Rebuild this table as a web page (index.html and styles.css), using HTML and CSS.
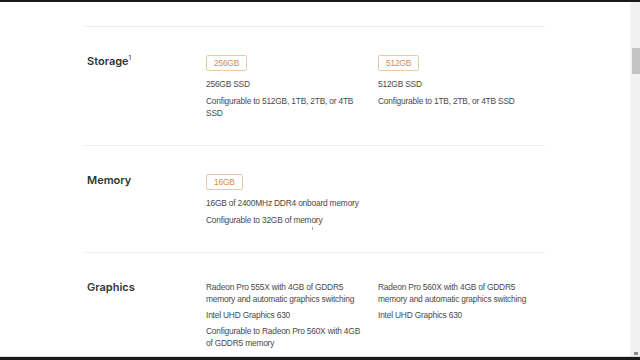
FILE: index.html
```html
<!DOCTYPE html>
<html lang="en">
<head>
<meta charset="utf-8">
<title>Tech Specs</title>
<link rel="stylesheet" href="styles.css">
</head>
<body>
<div class="topbar"></div>
<div class="viewport">
  <main class="page">
    <div class="specs">
      <section class="spec">
        <h2 class="label">Storage<sup>1</sup></h2>
        <div class="col">
          <span class="badge">256GB</span>
          <p>256GB SSD</p>
          <p>Configurable to 512GB, 1TB, 2TB, or 4TB SSD</p>
        </div>
        <div class="col">
          <span class="badge">512GB</span>
          <p>512GB SSD</p>
          <p>Configurable to 1TB, 2TB, or 4TB SSD</p>
        </div>
      </section>
      <section class="spec">
        <h2 class="label">Memory</h2>
        <div class="col wide">
          <span class="badge">16GB</span>
          <p>16GB of 2400MHz DDR4 onboard memory</p>
          <p>Configurable to 32GB of memory</p>
          <span class="cursor"></span>
        </div>
      </section>
      <section class="spec gfx">
        <h2 class="label">Graphics</h2>
        <div class="col">
          <p>Radeon Pro 555X with 4GB of GDDR5 memory and automatic graphics switching</p>
          <p>Intel UHD Graphics 630</p>
          <p>Configurable to Radeon Pro 560X with 4GB of GDDR5 memory</p>
        </div>
        <div class="col">
          <p>Radeon Pro 560X with 4GB of GDDR5 memory and automatic graphics switching</p>
          <p>Intel UHD Graphics 630</p>
        </div>
      </section>
    </div>
  </main>
  <div class="scrollbar">
    <div class="thumb"></div>
    <div class="arrow"></div>
  </div>
</div>
<div class="bottomline"></div>
<div class="bottombar"></div>
</body>
</html>
```
FILE: styles.css
```css
html, body {
  margin: 0;
  padding: 0;
  height: 360px;
  overflow: hidden;
  background: #ffffff;
}
body {
  display: flex;
  flex-direction: column;
  font-family: "Liberation Sans", Arial, sans-serif;
  color: #4a4a4a;
}
.topbar {
  height: 2px;
  background: #1a1a1a;
  flex: none;
}
.viewport {
  flex: 1;
  display: flex;
  min-height: 0;
}
.page {
  flex: 1;
  overflow: hidden;
}
.specs {
  width: 460px;
  margin-left: 85px;
  padding-top: 24px;
}
.spec {
  display: grid;
  grid-template-columns: 121px 172px 167px;
  border-top: 1px solid #ececec;
  padding: 28px 0 26px;
}
.spec.gfx {
  padding-top: 28px;
}
.label {
  margin: 0;
  padding-left: 2px;
  font-family: "Inter", "Liberation Sans", sans-serif;
  font-size: 11px;
  font-weight: 600;
  color: #333;
  line-height: 12px;
}
.label sup {
  font-size: 6px;
  vertical-align: 5px;
  line-height: 0;
  font-weight: 500;
}
.col {
  padding-right: 12px;
  font-size: 8.4px;
  letter-spacing: -0.2px;
  line-height: 12px;
  position: relative;
}
.col.wide {
  grid-column: span 2;
}
.col p {
  margin: 0 0 5px;
}
.gfx .col p {
  margin-bottom: 4px;
}
.col p:last-of-type,
.gfx .col p:last-of-type {
  margin-bottom: 0;
}
.badge {
  display: inline-block;
  box-sizing: border-box;
  height: 16px;
  line-height: 14px;
  padding: 0 7px;
  border: 1px solid #e9c9a8;
  border-radius: 2px;
  color: #d38c52;
  font-size: 8.4px;
  margin-bottom: 7px;
}
.cursor {
  position: absolute;
  left: 106px;
  bottom: -4px;
  width: 1px;
  height: 3px;
  background: #aaa;
}
.scrollbar {
  width: 9px;
  flex: none;
  background: #f1f1f1;
  border-left: 1px solid #f8f8f8;
  position: relative;
}
.thumb {
  position: absolute;
  left: 1px;
  right: 0;
  top: 46px;
  height: 26px;
  background: #c3c3c3;
}
.arrow {
  position: absolute;
  left: 3px;
  bottom: 1px;
  width: 4px;
  height: 3px;
  background: #8a8a8a;
}
.bottomline {
  height: 1px;
  background: #d8d8d8;
  flex: none;
}
.bottombar {
  height: 3px;
  background: #1a1a1a;
  flex: none;
}
```
